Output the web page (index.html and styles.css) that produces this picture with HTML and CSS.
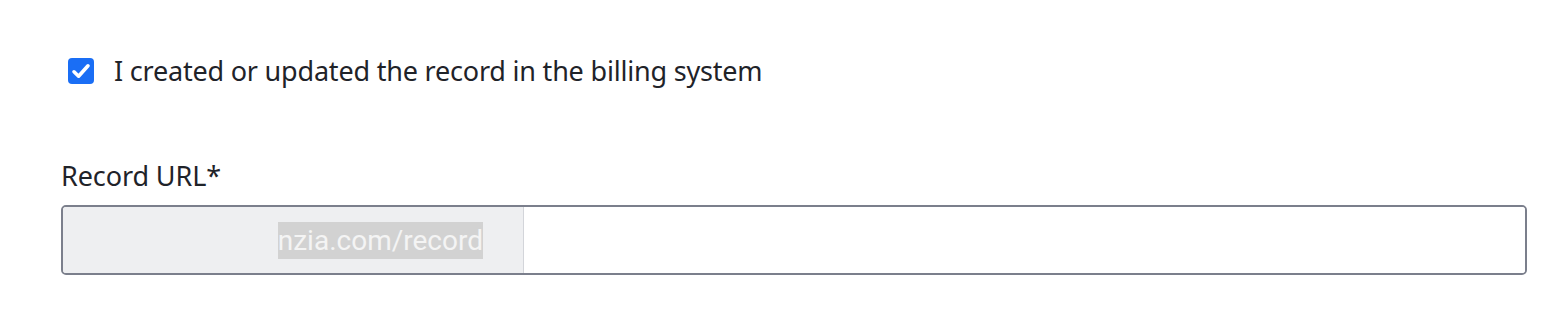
FILE: index.html
```html
<!DOCTYPE html>
<html>
<head>
<meta charset="utf-8">
<link rel="stylesheet" href="styles.css">
</head>
<body>
<div class="form">
  <label class="check-row">
    <span class="checkbox">
      <svg width="26" height="26" viewBox="0 0 26 26"><path d="M6 13.8 L10.6 18.2 L20 7.8" fill="none" stroke="#fff" stroke-width="3.6" stroke-linecap="round" stroke-linejoin="round"/></svg>
    </span>
    <span class="check-text">I created or updated the record in the billing system</span>
  </label>
  <div class="field">
    <div class="field-label">Record URL*</div>
    <div class="input">
      <div class="prefix"><span class="prefix-text">nzia.com/record</span></div>
      <div class="input-main"></div>
    </div>
  </div>
</div>
</body>
</html>
```

FILE: styles.css
```css
html, body {
  margin: 0;
  padding: 0;
  background: #ffffff;
}
body {
  font-family: "Noto Sans", "Open Sans", sans-serif;
  color: #1f2329;
}
.form {
  padding: 58px 35px 0 61px;
}
.check-row {
  display: flex;
  align-items: center;
  gap: 20px;
  padding-left: 7px;
  height: 26px;
}
.checkbox {
  width: 26px;
  height: 26px;
  border-radius: 4px;
  background: #1a6ef5;
  display: flex;
  align-items: center;
  justify-content: center;
  flex: none;
}
.check-text {
  font-size: 27px;
  letter-spacing: -0.2px;
  line-height: 26px;
}
.field {
  margin-top: 74px;
}
.field-label {
  font-size: 27px;
  letter-spacing: -0.1px;
  line-height: 36px;
  margin-bottom: 11px;
}
.input {
  display: flex;
  height: 66px;
  border: 2px solid #7b7f8c;
  border-radius: 5px;
  overflow: hidden;
}
.prefix {
  width: 461px;
  background: #eeeff1;
  border-right: 1px solid #d3d5da;
  display: flex;
  align-items: center;
  justify-content: flex-end;
  padding-right: 40px;
  box-sizing: border-box;
}
.prefix-text {
  font-family: Roboto, "Liberation Sans", sans-serif;
  font-size: 28px;
  line-height: 37px;
  background: #d2d2d2;
  color: #f4f4f4;
}
.input-main {
  flex: 1;
  background: #fff;
}
```
